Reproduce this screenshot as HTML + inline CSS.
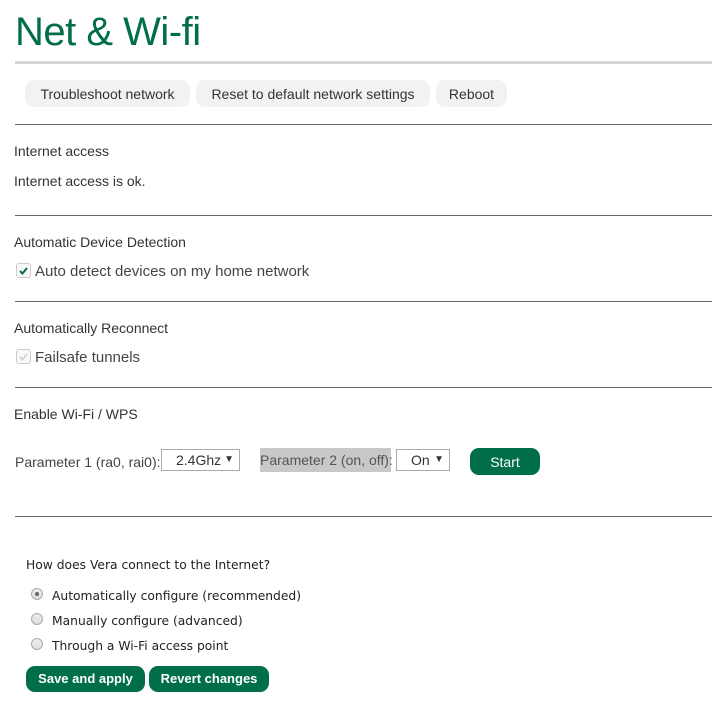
<!DOCTYPE html>
<html><head><style>
body{margin:0;width:720px;height:706px;background:#fff;font-family:"Liberation Sans",sans-serif;color:#333;position:relative;overflow:hidden}
.a{position:absolute;white-space:nowrap}
.t{font-size:14px;line-height:18px}
.hr{position:absolute;left:15px;width:697px;height:1px;background:#666}
.gb{position:absolute;top:80px;height:27px;background:#f2f2f2;border-radius:9px;font-size:14px;line-height:28px;text-align:center;color:#333}
.cb{position:absolute;left:16px;width:13px;height:13px;border:1px solid #ccc;border-radius:3px;background:#f8f8f8}
.sel{position:absolute;top:449px;height:20px;border:1px solid #aaa;background:#fff;font-size:14px;line-height:20px;color:#333}
.rd{position:absolute;left:31px;width:10px;height:10px;border:1px solid #aaa;border-radius:50%;background:linear-gradient(#eee,#ddd)}
.v{font-family:"DejaVu Sans",sans-serif;font-size:12.3px;color:#222}
.gr{position:absolute;background:#006e48;color:#fff;border-radius:9px;text-align:center}
</style></head><body>
<div class="a" style="left:15px;top:8px;font-size:40px;line-height:48px;color:#006e48;letter-spacing:-0.5px">Net &amp; Wi-fi</div>
<div class="a" style="left:15px;top:61px;width:697px;height:3px;background:#d6d6d6"></div>
<div class="gb" style="left:25px;width:165px">Troubleshoot network</div>
<div class="gb" style="left:196px;width:234px">Reset to default network settings</div>
<div class="gb" style="left:436px;width:71px">Reboot</div>
<div class="hr" style="top:124px"></div>
<div class="a t" style="left:14px;top:142px">Internet access</div>
<div class="a t" style="left:14px;top:172px">Internet access is ok.</div>
<div class="hr" style="top:215px"></div>
<div class="a t" style="left:14px;top:233px">Automatic Device Detection</div>
<div class="cb" style="top:263px"><svg width="13" height="13" style="position:absolute;left:0;top:0"><path d="M3 7 L5.5 9.5 L10 4" stroke="#006e48" stroke-width="2" fill="none"/></svg></div>
<div class="a" style="left:35px;top:263px;font-size:15px;line-height:18px;color:#444">Auto detect devices on my home network</div>
<div class="hr" style="top:301px"></div>
<div class="a t" style="left:14px;top:319px">Automatically Reconnect</div>
<div class="cb" style="top:349px"><svg width="13" height="13" style="position:absolute;left:0;top:0"><path d="M3 7 L5.5 9.5 L10 4" stroke="#ccc" stroke-width="1.5" fill="none"/></svg></div>
<div class="a" style="left:35px;top:349px;font-size:15px;line-height:18px;color:#444">Failsafe tunnels</div>
<div class="hr" style="top:387px"></div>
<div class="a t" style="left:14px;top:405px">Enable Wi-Fi / WPS</div>
<div class="a t" style="left:15px;top:453px;color:#444">Parameter 1 (ra0, rai0):</div>
<div class="sel" style="left:161px;width:77px"><span style="position:absolute;left:14px">2.4Ghz</span><span style="position:absolute;right:5px;font-size:10px">▼</span></div>
<div class="a t" style="left:260px;top:448px;width:131px;height:24px;line-height:25px;background:#c8c8c8;color:#555">Parameter 2 (on, off):</div>
<div class="sel" style="left:396px;width:52px"><span style="position:absolute;left:14px">On</span><span style="position:absolute;right:5px;font-size:10px">▼</span></div>
<div class="gr" style="left:470px;top:448px;width:70px;height:27px;line-height:28px;font-size:14px">Start</div>
<div class="hr" style="top:516px"></div>
<div class="a v" style="left:26px;top:558px">How does Vera connect to the Internet?</div>
<div class="rd" style="top:588px"><div style="position:absolute;left:3px;top:3px;width:4px;height:4px;border-radius:50%;background:#666"></div></div>
<div class="a v" style="left:52px;top:589px">Automatically configure (recommended)</div>
<div class="rd" style="top:613px"></div>
<div class="a v" style="left:52px;top:614px">Manually configure (advanced)</div>
<div class="rd" style="top:638px"></div>
<div class="a v" style="left:52px;top:639px">Through a Wi-Fi access point</div>
<div class="gr" style="left:26px;top:666px;width:119px;height:26px;line-height:26px;font-size:13px;font-weight:bold">Save and apply</div>
<div class="gr" style="left:149px;top:666px;width:120px;height:26px;line-height:26px;font-size:13px;font-weight:bold">Revert changes</div>
</body></html>
